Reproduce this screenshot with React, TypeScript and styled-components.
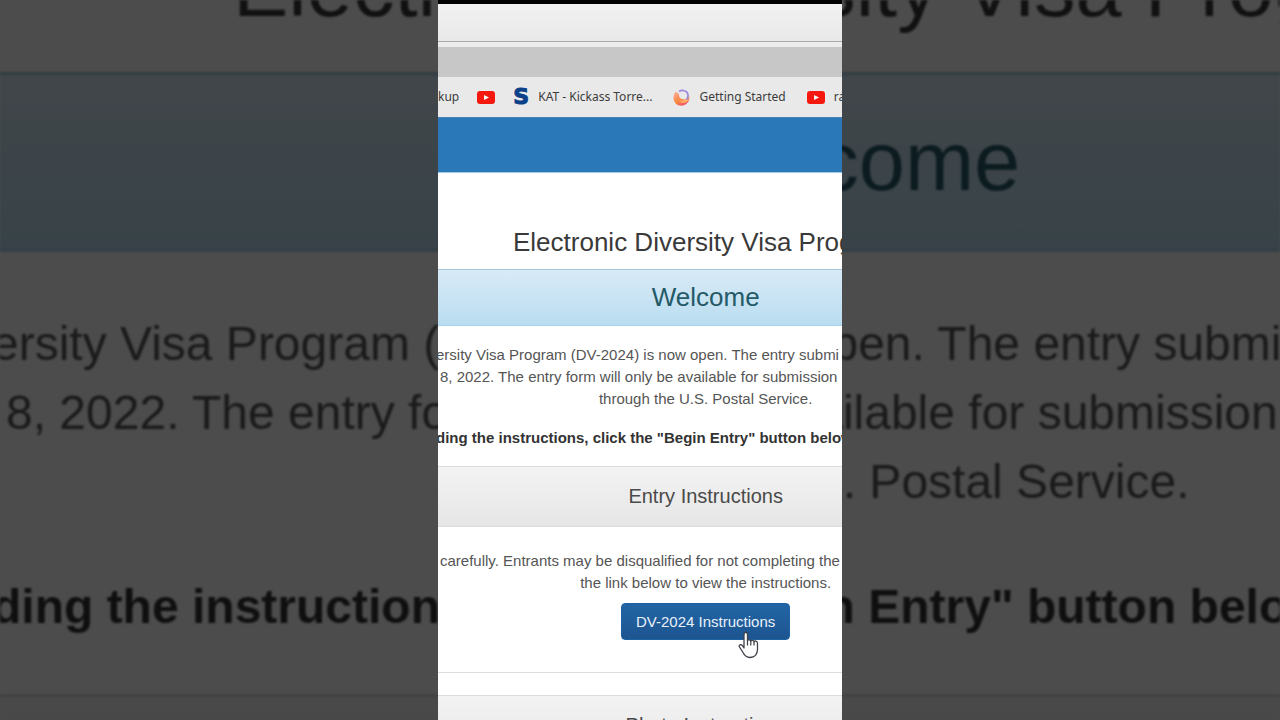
import React from "react";
import styled, { createGlobalStyle, ThemeProvider, css } from "styled-components";

const frontSizes = {
  title: 26,
  titleLine: 30,
  titleTop: 54,
  titleBottom: 12,
  banner: 57,
  body: 15,
  bodyLine: 22,
  introTop: 18,
  noteTop: 17,
  panelTop: 17,
  panel: 61,
  panelTitle: 20,
  border: 1,
  start: 2,
  cut: -2,
};

const backdropSizes = {
  title: 83,
  titleLine: 94,
  titleTop: -59,
  titleBottom: 37,
  banner: 180,
  body: 48,
  bodyLine: 69,
  introTop: 57,
  noteTop: 56,
  panelTop: 53,
  panel: 190,
  panelTitle: 62,
  border: 3,
  start: 6,
  cut: -8,
};

type Sizes = typeof frontSizes;
type Sized = { theme: any };
const px = (key: keyof Sizes) => (p: Sized) => `${(p.theme as Sizes)[key]}px`;

const GlobalStyle = createGlobalStyle`
  *, *::before, *::after { box-sizing: border-box; }
  html, body, #root { height: 100%; }
  body {
    margin: 0;
    overflow: hidden;
    background: #4c4c4c;
    font-family: "Liberation Sans", Arial, sans-serif;
  }
`;

const Stage = styled.div`
  display: grid;
  grid-template-columns: 1fr 404px 1fr;
  grid-template-rows: 100%;
  height: 100%;
  overflow: hidden;
`;

const Backdrop = styled.div`
  grid-area: 1 / 1 / 2 / 4;
  display: flow-root;
  overflow: hidden;
  background: #fff;
  filter: brightness(0.3) blur(1px);
`;

const Recording = styled.main`
  grid-area: 1 / 2 / 2 / 3;
  z-index: 1;
  overflow: hidden;
  background: #fff;
  border-top: 4px solid #000;
`;

const TitleBar = styled.div`
  height: 38px;
  background: linear-gradient(#f1f1f1, #e9e9e9);
  border-bottom: 1px solid #a8a8a8;
`;

const AddressBar = styled.div`
  height: 35px;
  background: #c7c7c7;
  border-top: 5px solid #ececec;
`;

const Bookmarks = styled.nav`
  display: flex;
  align-items: center;
  gap: 18px;
  height: 40px;
  overflow: hidden;
  background: #e9e9e9;
`;

const Bookmark = styled.a<{ $labelled?: boolean }>`
  display: flex;
  flex: none;
  align-items: center;
  gap: 9px;
  padding-right: ${(p) => (p.$labelled ? "3px" : "0")};
  color: #3c3c3c;
  font: 12px/20px "Noto Sans", sans-serif;
  white-space: nowrap;
  text-decoration: none;
`;

const LetterLogo = styled.span`
  width: 16px;
  color: #0b4189;
  font: bold 22px/20px "DejaVu Sans", sans-serif;
  -webkit-text-stroke: 1px #0b4189;
`;

const SiteHeader = styled.header`
  height: 56px;
  background: #2b78b9;
  border-top: 1px solid #4682b4;
  border-bottom: 1px solid #9fcbe8;
`;

const Document = styled.article`
  width: 132.5%;
  text-align: center;
`;

const Title = styled.h1`
  margin: ${px("titleTop")} 0 ${px("titleBottom")};
  color: #3a3a3a;
  font-size: ${px("title")};
  font-weight: 400;
  line-height: ${px("titleLine")};
`;

const Banner = styled.h2`
  display: flex;
  align-items: center;
  justify-content: center;
  height: ${px("banner")};
  margin: 0;
  border: 0 solid #a3cbde;
  border-top-width: ${px("border")};
  border-bottom: ${px("border")} solid #a9d2ea;
  background: linear-gradient(#d9eaf6, #b9ddf0);
  color: #245a68;
  font-size: ${px("title")};
  font-weight: 400;
`;

const bodyText = css`
  margin: 0;
  color: #555;
  font-size: ${px("body")};
  line-height: ${px("bodyLine")};
  white-space: nowrap;
`;

const Intro = styled.p`
  ${bodyText}
  padding-top: ${px("introTop")};
`;

const Line = styled.span<{ $cut?: boolean; $start?: boolean }>`
  display: block;
  text-align: ${(p) => (p.$cut || p.$start ? "left" : "center")};
  text-indent: ${(p) => (p.$cut ? px("cut") : p.$start ? px("start") : "0")};
`;

const Note = styled.p`
  ${bodyText}
  padding-top: ${px("noteTop")};
  color: #333;
  font-weight: 700;
`;

const PanelTitle = styled.h3`
  display: flex;
  align-items: center;
  justify-content: center;
  height: ${px("panel")};
  margin: ${px("panelTop")} 0 0;
  border: 0 solid #dcdcdc;
  border-top-width: ${px("border")};
  border-bottom-width: ${px("border")};
  background: linear-gradient(#f3f3f3, #e6e6e6);
  color: #4a4a4a;
  font-size: ${px("panelTitle")};
  font-weight: 400;
`;

const PanelBody = styled.section`
  padding: 23px 0 32px;
  border-bottom: 1px solid #dedede;
`;

const PanelText = styled.p`
  ${bodyText}
`;

const ButtonArea = styled.div`
  position: relative;
  width: fit-content;
  margin: 9px auto 0;
`;

const InstructionsButton = styled.button`
  display: block;
  height: 37px;
  padding: 0 14px;
  border: 1px solid #1f62a3;
  border-radius: 4px;
  background: linear-gradient(#2265a5, #1d5590);
  color: #e9f1fa;
  font: 15px/20px "Liberation Sans", Arial, sans-serif;
  cursor: pointer;
`;

const Pointer = styled.svg`
  position: absolute;
  right: 31px;
  bottom: -19px;
  width: 21px;
  height: 28px;
  pointer-events: none;
`;

const NextPanel = styled.div`
  padding-top: 5px;
`;

const VideoIcon = () => (
  <svg width="18" height="13" viewBox="0 0 18 13" aria-hidden="true">
    <rect width="18" height="13" rx="3" fill="#f5180f" />
    <path d="M7 4v5l5-2.500z" fill="#fff" />
  </svg>
);

const BrowserIcon = () => (
  <svg width="17" height="17" viewBox="0 0 17 17" aria-hidden="true">
    <defs>
      <linearGradient id="flame" x1="0.2" y1="0.2" x2="0.7" y2="1">
        <stop offset="0" stopColor="#f9a07e" />
        <stop offset="0.5" stopColor="#fb8a3c" />
        <stop offset="1" stopColor="#f0487a" />
      </linearGradient>
      <linearGradient id="glow" x1="0" y1="0.3" x2="1" y2="0.8">
        <stop offset="0" stopColor="#fb7a4c" />
        <stop offset="1" stopColor="#ffc36a" />
      </linearGradient>
    </defs>
    <path d="M3 2.500C3.500 4 4.500 4 6 4.500 5 8 8 11 12 10.500c2-.3 3.500-2 4-4C17.500 12 13.500 16.700 8.500 16.700 4 16.700.5 13.500.5 9 .5 6.500 1.500 4 3 2.500z" fill="url(#flame)" />
    <path d="M6 5C4.500 9.500 8 12 12 10.800c2-.6 3-2 3.600-3.300C16 12 13 14 9.500 14 5.500 14 3 10 6 5z" fill="url(#glow)" />
    <path d="M6 2.500C9 .5 14.500 1.500 15 6c.1 2-.6 3.500-1.600 4.500" fill="none" stroke="#9d86dc" strokeWidth="1.700" />
  </svg>
);

const EntryIntro = () => (
  <>
    <Title>Electronic Diversity Visa Program</Title>
    <Banner>Welcome</Banner>
    <Intro>
      <Line $cut>ersity Visa Program (DV-2024) is now open. The entry submi</Line>
      <Line $start>8, 2022. The entry form will only be available for submission</Line>
      <Line>through the U.S. Postal Service.</Line>
    </Intro>
    <Note>
      <Line $cut>ding the instructions, click the "Begin Entry" button below</Line>
    </Note>
  </>
);

export default function App() {
  return (
    <>
      <GlobalStyle />
      <Stage>
        <ThemeProvider theme={backdropSizes}>
          <Backdrop aria-hidden="true">
            <Document>
              <EntryIntro />
              <PanelTitle />
            </Document>
          </Backdrop>
        </ThemeProvider>
        <ThemeProvider theme={frontSizes}>
          <Recording>
            <TitleBar />
            <AddressBar />
            <Bookmarks>
              <Bookmark href="#backup">kup</Bookmark>
              <Bookmark href="#video" aria-label="Video">
                <VideoIcon />
              </Bookmark>
              <Bookmark href="#kat" $labelled>
                <LetterLogo>S</LetterLogo>
                KAT - Kickass Torre...
              </Bookmark>
              <Bookmark href="#start" $labelled>
                <BrowserIcon />
                Getting Started
              </Bookmark>
              <Bookmark href="#ra">
                <VideoIcon />
                ra
              </Bookmark>
            </Bookmarks>
            <SiteHeader />
            <Document>
              <EntryIntro />
              <PanelTitle>Entry Instructions</PanelTitle>
              <PanelBody>
                <PanelText>
                  <Line $start>carefully. Entrants may be disqualified for not completing the</Line>
                  <Line>the link below to view the instructions.</Line>
                </PanelText>
                <ButtonArea>
                  <InstructionsButton type="button">DV-2024 Instructions</InstructionsButton>
                  <Pointer viewBox="0 0 21 28" aria-hidden="true">
                    <path
                      d="M6 17V3.500C6 .5 9.500.5 9.500 3.500V10c0-1.800 3.300-1.600 3.300.4 0-1.700 3.200-1.500 3.200.6 0-1.500 3.500-1.500 3.500 1.500V18c0 5-2.500 8.500-7.500 8.500-4 0-5.500-2-7-5L1.500 16c-1-2.200 1.500-3.200 2.800-1.500z"
                      fill="#fff"
                      stroke="#3d4048"
                      strokeWidth="1.300"
                      strokeLinejoin="round"
                    />
                    <path d="M9.500 10v4.500M12.800 10.400v4.100M16 11v3.500" stroke="#3d4048" strokeWidth="1.200" />
                  </Pointer>
                </ButtonArea>
              </PanelBody>
              <NextPanel>
                <PanelTitle>Photo Instructions</PanelTitle>
              </NextPanel>
            </Document>
          </Recording>
        </ThemeProvider>
      </Stage>
    </>
  );
}
